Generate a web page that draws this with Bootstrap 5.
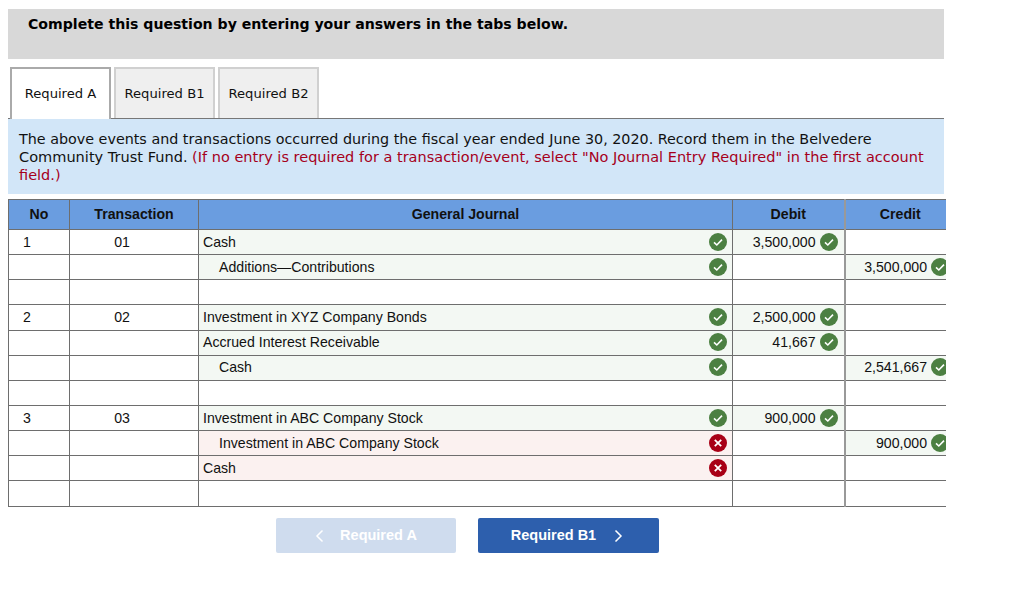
<!DOCTYPE html>
<html lang="en">
<head>
<meta charset="utf-8">
<title>Required A</title>
<link rel="stylesheet" href="https://cdn.jsdelivr.net/npm/bootstrap@5.3.0/dist/css/bootstrap.min.css">
<style>
body{background:#fff;color:#111;font-family:"DejaVu Sans",sans-serif;overflow:hidden}
.page-wrap{width:1024px;height:602px;padding:9px 80px 0 8px}
.q-banner{height:50px;background:#d8d8d8;padding:5px 20px;font-size:14.1px;font-weight:700;line-height:20px;color:#000}
.tab-strip{margin-top:8px;height:52px;padding-left:2px;gap:3px;border-bottom:1px solid #777}
.tab-btn{width:101px;height:51px;font-size:13.15px;line-height:50px;text-align:center;background:#efefef;border:2px solid #d0d0d0;border-bottom:0;color:#111}
.tab-btn.on{background:#fff;border-color:#aaa;height:52px;margin-bottom:-1px}
.info-box{height:75px;background:#d2e6f8;padding:12px 11px 0;font-size:14.32px;line-height:17.3px;color:#111}
.fund-name{font-size:14.55px}
.red-note{color:#a6001c;font-size:14.5px}
.grid-clip{margin-top:5px;width:938px;overflow:hidden}
.je{table-layout:fixed;width:948px;border-collapse:collapse;font-family:"Liberation Sans",Arial,sans-serif;font-size:14.13px;margin:0;color:#111}
.je th,.je td{border:1px solid #6e6e6e;padding:0 4px;height:25.15px;line-height:20px;vertical-align:middle;white-space:nowrap}
.je th:last-child,.je td:last-child{border-left:2px solid #999}
.je th{height:30px;padding-bottom:2px;background:#6a9de0;text-align:center;font-weight:700;color:#111}
.je th:last-child{padding-right:5px}
.je td{padding-bottom:1px}
.je td.ctr{text-align:center;padding-right:28px}
.je td.ok{background:#f3f8f3}
.je td.bad{background:#fbf1f0}
.cellbox{display:flex;align-items:center;justify-content:space-between;padding-right:1px}
.cellbox.end{justify-content:flex-end;gap:4px;padding-right:2px}
.je td:last-child .cellbox.end{padding-right:3px}
.ind{padding-left:16px}
.mk{width:18px;height:18px;flex:none;display:block}
.foot-btns{margin-top:11px;padding-left:268px;gap:22px}
.nav-b{height:35px;border-radius:2px;border:0;font-family:"Liberation Sans",Arial,sans-serif;font-size:14.5px;font-weight:700;color:#fff;padding:1px 0 0;display:flex;align-items:center;justify-content:center}
.prev-b{width:180px;background:#cfdcee;gap:16px}
.next-b{width:181px;background:#2d5fad;gap:18px;padding-right:3px}
.chev{width:9px;height:14px}
</style>
</head>
<body>
<svg width="0" height="0" class="position-absolute">
<symbol id="yes" viewBox="0 0 18 18"><circle cx="9" cy="9" r="9" fill="#4c8042"/><path d="M5 9.4l2.8 2.6L13 6.6" fill="none" stroke="#fff" stroke-width="1.6"/></symbol>
<symbol id="no" viewBox="0 0 18 18"><circle cx="9" cy="9" r="9" fill="#a80016"/><path d="M5.8 5.8l6.4 6.4M12.2 5.8l-6.4 6.4" fill="none" stroke="#fff" stroke-width="1.8"/></symbol>
</svg>
<div class="page-wrap">
<div class="q-banner">Complete this question by entering your answers in the tabs below.</div>
<div class="tab-strip d-flex">
<div class="tab-btn on">Required A</div>
<div class="tab-btn">Required B1</div>
<div class="tab-btn">Required B2</div>
</div>
<div class="info-box"><span>The above events and transactions occurred during the fiscal year ended June 30, 2020. Record them in the Belvedere</span> <span class="fund-name">Community Trust Fund.</span> <span class="red-note">(If no entry is required for a transaction/event, select "No Journal Entry Required" in the first account</span> <span class="red-note">field.)</span></div>
<div class="grid-clip">
<table class="je">
<colgroup><col style="width:61px"><col style="width:129px"><col style="width:534px"><col style="width:112px"><col style="width:112px"></colgroup>
<thead><tr><th>No</th><th>Transaction</th><th>General Journal</th><th>Debit</th><th>Credit</th></tr></thead>
<tbody>
<tr><td class="ctr">1</td><td class="ctr">01</td><td class="ok"><div class="cellbox"><span>Cash</span><svg class="mk"><use href="#yes"/></svg></div></td><td class="ok"><div class="cellbox end"><span>3,500,000</span><svg class="mk"><use href="#yes"/></svg></div></td><td></td></tr>
<tr><td></td><td></td><td class="ok"><div class="cellbox"><span class="ind">Additions—Contributions</span><svg class="mk"><use href="#yes"/></svg></div></td><td></td><td class="ok"><div class="cellbox end"><span>3,500,000</span><svg class="mk"><use href="#yes"/></svg></div></td></tr>
<tr><td></td><td></td><td></td><td></td><td></td></tr>
<tr><td class="ctr">2</td><td class="ctr">02</td><td class="ok"><div class="cellbox"><span>Investment in XYZ Company Bonds</span><svg class="mk"><use href="#yes"/></svg></div></td><td class="ok"><div class="cellbox end"><span>2,500,000</span><svg class="mk"><use href="#yes"/></svg></div></td><td></td></tr>
<tr><td></td><td></td><td class="ok"><div class="cellbox"><span>Accrued Interest Receivable</span><svg class="mk"><use href="#yes"/></svg></div></td><td class="ok"><div class="cellbox end"><span>41,667</span><svg class="mk"><use href="#yes"/></svg></div></td><td></td></tr>
<tr><td></td><td></td><td class="ok"><div class="cellbox"><span class="ind">Cash</span><svg class="mk"><use href="#yes"/></svg></div></td><td></td><td class="ok"><div class="cellbox end"><span>2,541,667</span><svg class="mk"><use href="#yes"/></svg></div></td></tr>
<tr><td></td><td></td><td></td><td></td><td></td></tr>
<tr><td class="ctr">3</td><td class="ctr">03</td><td class="ok"><div class="cellbox"><span>Investment in ABC Company Stock</span><svg class="mk"><use href="#yes"/></svg></div></td><td class="ok"><div class="cellbox end"><span>900,000</span><svg class="mk"><use href="#yes"/></svg></div></td><td></td></tr>
<tr><td></td><td></td><td class="bad"><div class="cellbox"><span class="ind">Investment in ABC Company Stock</span><svg class="mk"><use href="#no"/></svg></div></td><td></td><td class="ok"><div class="cellbox end"><span>900,000</span><svg class="mk"><use href="#yes"/></svg></div></td></tr>
<tr><td></td><td></td><td class="bad"><div class="cellbox"><span>Cash</span><svg class="mk"><use href="#no"/></svg></div></td><td></td><td></td></tr>
<tr><td></td><td></td><td></td><td></td><td></td></tr>
</tbody>
</table>
</div>
<div class="foot-btns d-flex">
<button type="button" class="btn nav-b prev-b"><svg class="chev" viewBox="0 0 9 14"><path d="M7.5 1.5L2 7l5.5 5.5" fill="none" stroke="#fff" stroke-width="1.5"/></svg><span>Required A</span></button>
<button type="button" class="btn nav-b next-b"><span>Required B1</span><svg class="chev" viewBox="0 0 9 14"><path d="M1.5 1.5L7 7l-5.5 5.5" fill="none" stroke="#fff" stroke-width="1.5"/></svg></button>
</div>
</div>
<script src="https://cdn.jsdelivr.net/npm/bootstrap@5.3.0/dist/js/bootstrap.bundle.min.js"></script>
</body>
</html>
